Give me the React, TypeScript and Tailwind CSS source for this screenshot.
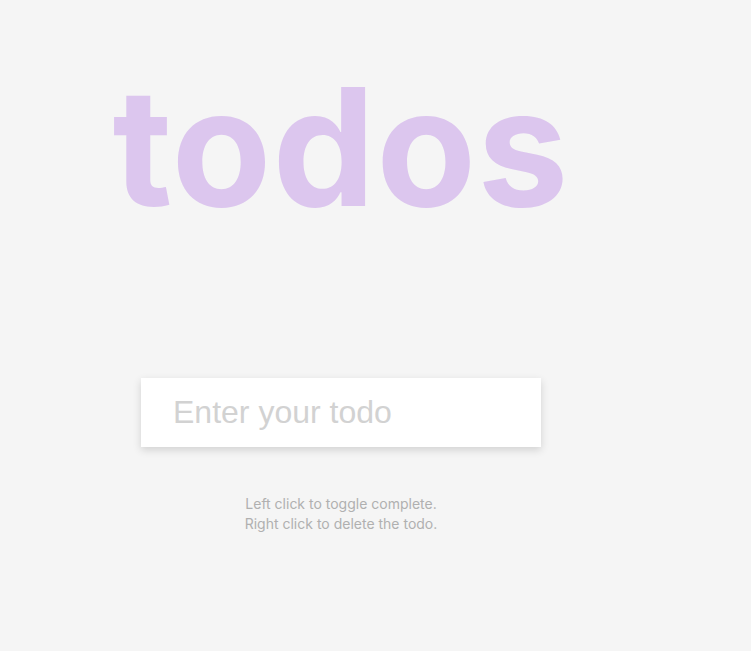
// todo app landing view: big title, entry box and hints

import { useState } from "react";

export default function App() {
  const [todo, setTodo] = useState("");

  return (
    <div className="min-h-screen w-full bg-[#f5f5f5]">
      <div className="w-[682px] flex flex-col items-center">
        <h1 className="mt-[67px] text-[163px] leading-[160px] font-bold text-[#dcc6ee] tracking-[1px] font-['Inter','Open_Sans',sans-serif]">
          todos
        </h1>
        <input
          className="mt-[151px] w-[400px] h-[69px] bg-white pl-8 pr-4 text-[32px] text-[#555] placeholder:text-[#d2d2d2] outline-none shadow-[0_3px_8px_rgba(0,0,0,0.15)] font-['Liberation_Sans',Arial,sans-serif]"
          placeholder="Enter your todo"
          value={todo}
          onChange={(e) => setTodo(e.target.value)}
        />
        <div className="mt-[47px] text-center text-[14px] leading-[20px] text-[#b0b0b0] font-['Inter','Open_Sans',sans-serif]">
          <p>Left click to toggle complete.</p>
          <p>Right click to delete the todo.</p>
        </div>
      </div>
    </div>
  );
}
